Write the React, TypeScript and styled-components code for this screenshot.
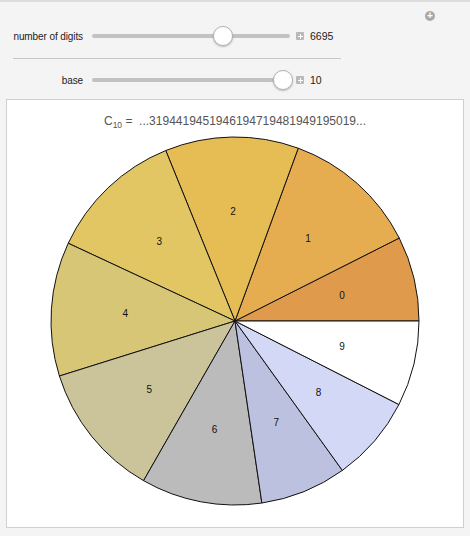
import React from "react";
import styled, { createGlobalStyle } from "styled-components";

const Global = createGlobalStyle`
  html, body { margin: 0; padding: 0; background: #f4f4f4; }
  body { font-family: "Liberation Sans", Arial, sans-serif; }
`;

const Page = styled.div`
  width: 470px;
  height: 536px;
  box-sizing: border-box;
  background: #f4f4f4;
  border-top: 2px solid #dcdcdc;
  position: relative;
  display: flex;
  flex-direction: column;
`;

const CornerPlus = styled.div`
  position: absolute;
  right: 35px;
  top: 9px;
  width: 10px;
  height: 10px;
  border-radius: 50%;
  background: #a8a8a8;
  display: flex;
  align-items: center;
  justify-content: center;
  color: #fff;
  font-size: 10px;
  font-weight: bold;
  line-height: 10px;
`;

const Controls = styled.div`
  padding-top: 24px;
  height: 73px;
  display: flex;
  flex-direction: column;
`;

const Row = styled.div`
  display: flex;
  align-items: center;
  height: 20px;
`;

const Label = styled.div`
  width: 83px;
  text-align: right;
  font-size: 10px;
  letter-spacing: -0.1px;
  color: #222;
  margin-right: 9px;
  white-space: nowrap;
`;

const Track = styled.div`
  position: relative;
  width: 198px;
  height: 4px;
  border-radius: 2px;
  background: #c2c2c2;
`;

const Thumb = styled.div<{ $pos: number }>`
  position: absolute;
  top: -8px;
  left: ${(p) => p.$pos - 10}px;
  width: 18px;
  height: 18px;
  border-radius: 50%;
  background: #fff;
  border: 1px solid #b4b4b4;
  box-shadow: 0 1px 2px rgba(0, 0, 0, 0.25);
`;

const PlusBox = styled.div`
  width: 8px;
  height: 8px;
  margin-left: 6px;
  background: #b9b9b9;
  border-radius: 1px;
  position: relative;
  &::before, &::after {
    content: "";
    position: absolute;
    background: #fff;
  }
  &::before { left: 1.5px; right: 1.5px; top: 3.5px; height: 1px; }
  &::after { top: 1.5px; bottom: 1.5px; left: 3.5px; width: 1px; }
`;

const Value = styled.div`
  margin-left: 6px;
  font-size: 10.5px;
  color: #222;
`;

const Separator = styled.div`
  margin: 12px 0 11px 13px;
  width: 328px;
  height: 1px;
  background: #c8c8c8;
`;

const Panel = styled.div`
  margin-left: 6px;
  width: 458px;
  height: 429px;
  box-sizing: border-box;
  background: #fff;
  border: 1px solid #cfcfcf;
  display: flex;
  flex-direction: column;
  align-items: center;
`;

const Title = styled.div`
  margin-top: 13px;
  height: 16px;
  line-height: 16px;
  font-size: 12px;
  color: #555;
  white-space: nowrap;
  sub { font-size: 8.5px; vertical-align: -3px; line-height: 0; }
`;

const Chart = styled.svg`
  display: block;
  flex: none;
`;

const bounds = [0, 26.8, 69.9, 112.1, 155, 197.4, 240.2, 278.4, 305.7, 333, 360];
const colors = [
  "#e09a4c",
  "#e5ad50",
  "#e6bd55",
  "#e2c663",
  "#d8c677",
  "#cbc49a",
  "#bbbbbb",
  "#bcc1e0",
  "#d3d8f7",
  "#ffffff",
];

const CX = 228;
const CY = 192;
const R = 184;

function pt(deg: number, r: number) {
  const a = (deg * Math.PI) / 180;
  return [CX + r * Math.cos(a), CY - r * Math.sin(a)];
}

function Pie() {
  return (
    <Chart width={456} height={398} viewBox="0 0 456 398">
      {colors.map((c, i) => {
        const a0 = bounds[i];
        const a1 = bounds[i + 1];
        const [x0, y0] = pt(a0, R);
        const [x1, y1] = pt(a1, R);
        const large = a1 - a0 > 180 ? 1 : 0;
        const d = `M${CX},${CY} L${x0},${y0} A${R},${R} 0 ${large} 0 ${x1},${y1} Z`;
        return <path key={i} d={d} fill={c} stroke="#111" strokeWidth={1} strokeLinejoin="round" />;
      })}
      {colors.map((_, i) => {
        const mid = (bounds[i] + bounds[i + 1]) / 2;
        const [x, y] = pt(mid, 110);
        return (
          <text
            key={"t" + i}
            x={x}
            y={y + 3.5}
            textAnchor="middle"
            fontSize={10}
            fontFamily="Liberation Sans, Arial, sans-serif"
            fill="#111"
          >
            {i}
          </text>
        );
      })}
    </Chart>
  );
}

export default function App() {
  return (
    <>
      <Global />
      <Page>
        <CornerPlus>+</CornerPlus>
        <Controls>
          <Row>
            <Label>number of digits</Label>
            <Track>
              <Thumb $pos={131} />
            </Track>
            <PlusBox />
            <Value>6695</Value>
          </Row>
          <Separator />
          <Row>
            <Label>base</Label>
            <Track>
              <Thumb $pos={191} />
            </Track>
            <PlusBox />
            <Value>10</Value>
          </Row>
        </Controls>
        <Panel>
          <Title>
            C<sub>10</sub> = &nbsp;...3194419451946194719481949195019...
          </Title>
          <Pie />
        </Panel>
      </Page>
    </>
  );
}
